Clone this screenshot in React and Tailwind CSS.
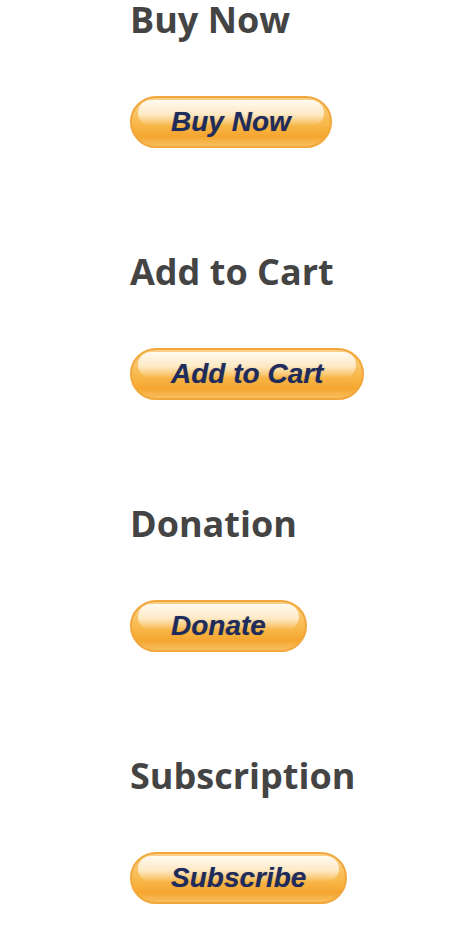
const sections = [
  { title: 'Buy Now', label: 'Buy Now' },
  { title: 'Add to Cart', label: 'Add to Cart' },
  { title: 'Donation', label: 'Donate' },
  { title: 'Subscription', label: 'Subscribe' },
];

function PayButton({ label }) {
  return (
    <button
      type="button"
      className="relative h-[52px] px-[39px] rounded-full border-2 border-[#f2a73c] bg-[linear-gradient(to_bottom,#fbd08a_0%,#f8bb4f_50%,#f5a62f_80%,#f8bf5e_100%)]"
    >
      {/* soft gloss */}
      <span className="absolute left-[6px] right-[6px] top-[2px] h-[26px] rounded-full bg-[linear-gradient(to_bottom,rgba(255,252,245,0.95)_0%,rgba(254,240,214,0.85)_55%,rgba(253,226,173,0)_100%)]" />
      <span className="relative font-['Liberation_Sans',Arial,sans-serif] font-bold italic text-[28px] leading-none text-[#1f2c5b] [text-shadow:0_0_1px_rgba(31,44,91,0.4)]">
        {label}
      </span>
    </button>
  );
}

export default function App() {
  return (
    <div className="w-[468px] h-[928px] bg-white pl-[130px] flex flex-col gap-[104px] overflow-hidden">
      {sections.map((s) => (
        <div key={s.title} className="flex flex-col items-start gap-[56px]">
          <h2 className="font-['Open_Sans',sans-serif] font-bold text-[36px] leading-[40px] text-[#444444]">
            {s.title}
          </h2>
          <PayButton label={s.label} />
        </div>
      ))}
    </div>
  );
}
